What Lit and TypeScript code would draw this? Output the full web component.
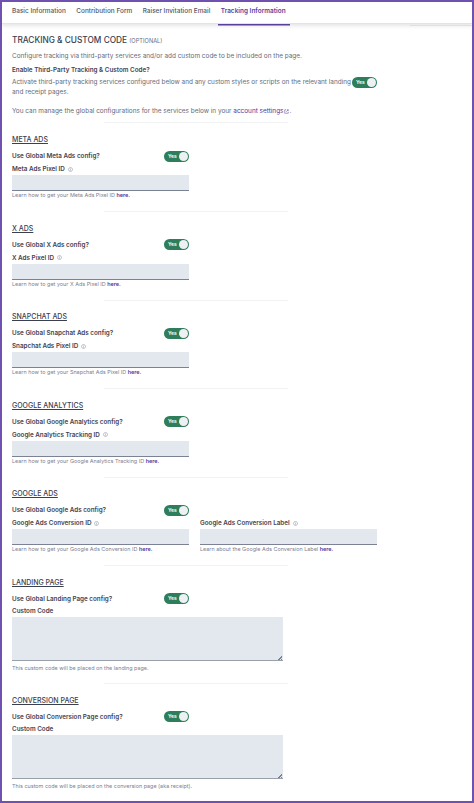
import { LitElement, html, css } from "lit";
import { customElement } from "lit/decorators.js";

const info = html`<svg class="info" viewBox="0 0 10 10"><circle cx="5" cy="5" r="4" fill="none" stroke="currentColor" stroke-width=".8"/><path d="M5 4.4v3M5 2.6v.9" stroke="currentColor" stroke-width=".9" fill="none"/></svg>`;
const toggle = html`<span class="toggle"><span class="yes">Yes</span><span class="knob"></span></span>`;

interface Field { label: string; help: string }
interface Section { title: string; config: string; fields?: Field[]; code?: string }

const sections: Section[] = [
  { title: "META ADS", config: "Use Global Meta Ads config?", fields: [{ label: "Meta Ads Pixel ID", help: "Learn how to get your Meta Ads Pixel ID " }] },
  { title: "X ADS", config: "Use Global X Ads config?", fields: [{ label: "X Ads Pixel ID", help: "Learn how to get your X Ads Pixel ID " }] },
  { title: "SNAPCHAT ADS", config: "Use Global Snapchat Ads config?", fields: [{ label: "Snapchat Ads Pixel ID", help: "Learn how to get your Snapchat Ads Pixel ID " }] },
  { title: "GOOGLE ANALYTICS", config: "Use Global Google Analytics config?", fields: [{ label: "Google Analytics Tracking ID", help: "Learn how to get your Google Analytics Tracking ID " }] },
  { title: "GOOGLE ADS", config: "Use Global Google Ads config?", fields: [
    { label: "Google Ads Conversion ID", help: "Learn how to get your Google Ads Conversion ID " },
    { label: "Google Ads Conversion Label", help: "Learn about the Google Ads Conversion Label " },
  ] },
  { title: "LANDING PAGE", config: "Use Global Landing Page config?", code: "This custom code will be placed on the landing page." },
  { title: "CONVERSION PAGE", config: "Use Global Conversion Page config?", code: "This custom code will be placed on the conversion page (aka receipt)." },
];

@customElement("app-root")
export class AppRoot extends LitElement {
  static styles = css`
    :host { display: block; width: 474px; height: 803px; box-sizing: border-box; overflow: hidden; background: #fff;
      border: 2px solid #6f52b0; font-family: Inter, "Open Sans", sans-serif; color: #3f4654; position: relative; }
    .tabs { display: flex; gap: 10.5px; height: 22px; padding-left: 10px; box-sizing: border-box; border-bottom: 1px solid #e4e4e8;
      box-shadow: 0 2px 4px rgba(40,40,60,.12); background: #fff; position: relative; }
    .tab { font-size: 6.4px; font-weight: 500; color: #4f5563; line-height: 19.5px; white-space: nowrap; letter-spacing: .03px; }
    .tab.active { color: #5b3f9e; font-weight: 600; box-shadow: 0 1.5px 0 #5b3f9e; padding: 0 4px 0 3px; margin-left: -3px; height: 21.5px; }
    .edge { position: absolute; right: 0; top: 23px; width: 62px; height: 1px; background: #dfe0e4; }
    .content { padding: 10px 10px 0; }
    h1 { margin: 0; font-size: 8.3px; line-height: 12px; font-weight: 500; color: #3b4050; }
    h1 small { font-size: 5.7px; font-weight: 400; color: #6a7080; margin-left: 0; }
    p { margin: 0; font-size: 6.43px; line-height: 9px; color: #666c7a; }
    .intro { margin-top: 4.5px; }
    .enable-label { margin-top: 5px; font-size: 6.3px; line-height: 9px; font-weight: 600; color: #3f4452; }
    .enable { width: 376px; margin-top: 2px; font-size: 6.43px; line-height: 10px; color: #666c7a; position: relative; }
    .enable .toggle { position: absolute; left: 340px; top: 0; }
    .manage { margin-top: 10.5px; }
    a { color: #54389c; text-decoration: none; }
    .ext { width: 5px; height: 5px; color: #54389c; vertical-align: -0.5px; margin-left: 1px; }
    .section { padding-top: 10.5px; }
    .section.first { padding-top: 0; }
    h2 { margin: 0; font-size: 7px; line-height: 12px; font-weight: 500; color: #3b4050; text-decoration: underline; }
    .row { display: flex; justify-content: space-between; align-items: center; width: 177px; height: 12px; margin-top: 4px; }
    .bold { font-size: 6.3px; font-weight: 600; color: #3f4452; line-height: 12px; white-space: nowrap; }
    .toggle { display: inline-flex; align-items: center; justify-content: space-between; box-sizing: border-box; width: 25px; height: 11px;
      border-radius: 6px; background: #2e7d5b; padding: 0 1px 0 4px; }
    .yes { color: #fff; font-size: 5px; font-weight: 600; line-height: 9px; }
    .knob { width: 9px; height: 9px; background: #eef1f3; border-radius: 50%; }
    .fields { display: flex; gap: 11px; margin-top: 1px; }
    .field { width: 177px; }
    .lab { display: flex; align-items: center; gap: 3px; }
    .info { width: 5px; height: 5px; color: #6a7080; }
    .input { height: 16px; box-sizing: border-box; background: #e2e8ee; border-bottom: 1px solid #7a8294; }
    .help { font-size: 5.45px; line-height: 9px; color: #7a8090; white-space: nowrap; }
    .help a { font-weight: 600; }
    .code { width: 271px; margin-top: 0.5px; }
    .area { height: 44px; box-sizing: border-box; background: #e2e8ee; border-bottom: 1.5px solid #9aa0aa; position: relative; }
    .grip { position: absolute; right: 1px; bottom: 0; width: 4px; height: 4px; background: linear-gradient(135deg, transparent 50%, #7a8190 50%, #7a8190 65%, transparent 65%, transparent 80%, #7a8190 80%); }
    .code .help { margin-top: 3px; }
    .div { width: 184px; height: 1px; background: #f1f2f4; margin: 11px 0 0 92px; }
    .code + .div { margin-top: 10px; }
    .div.top-div { margin: 6px 0 11px 92px; }
  `;

  private renderBody(s: Section) {
    if (s.code) {
      return html`<div class="code"><div class="bold">Custom Code</div><div class="area"><span class="grip"></span></div><div class="help">${s.code}</div></div>`;
    }
    return html`<div class="fields">${s.fields!.map((f) => html`<div class="field">
      <div class="lab"><span class="bold">${f.label}</span>${info}</div>
      <div class="input"></div>
      <div class="help">${f.help}<a>here.</a></div>
    </div>`)}</div>`;
  }

  render() {
    return html`
      <div class="tabs">
        <span class="tab">Basic Information</span>
        <span class="tab">Contribution Form</span>
        <span class="tab">Raiser Invitation Email</span>
        <span class="tab active">Tracking Information</span>
      </div>
      <div class="edge"></div>
      <div class="content">
        <h1>TRACKING &amp; CUSTOM CODE <small>(OPTIONAL)</small></h1>
        <p class="intro">Configure tracking via third-party services and/or add custom code to be included on the page.</p>
        <div class="enable-label">Enable Third-Party Tracking &amp; Custom Code?</div>
        <div class="enable">Activate third-party tracking services configured below and any custom styles or scripts on the relevant landing<br />and receipt pages.${toggle}</div>
        <p class="manage">You can manage the global configurations for the services below in your <a>account settings</a><svg class="ext" viewBox="0 0 10 10"><path d="M4 1.5H1.5v7h7V6M5.5 1.5h3v3M8.5 1.5 4.5 5.5" fill="none" stroke="currentColor" stroke-width="1"/></svg>.</p>
        <div class="div top-div"></div>
        ${sections.map((s, i) => html`<div class="section ${i === 0 ? "first" : ""}">
          <h2>${s.title}</h2>
          <div class="row"><span class="bold">${s.config}</span>${toggle}</div>
          ${this.renderBody(s)}
          ${i < sections.length - 1 ? html`<div class="div"></div>` : ""}
        </div>`)}
      </div>
    `;
  }
}
